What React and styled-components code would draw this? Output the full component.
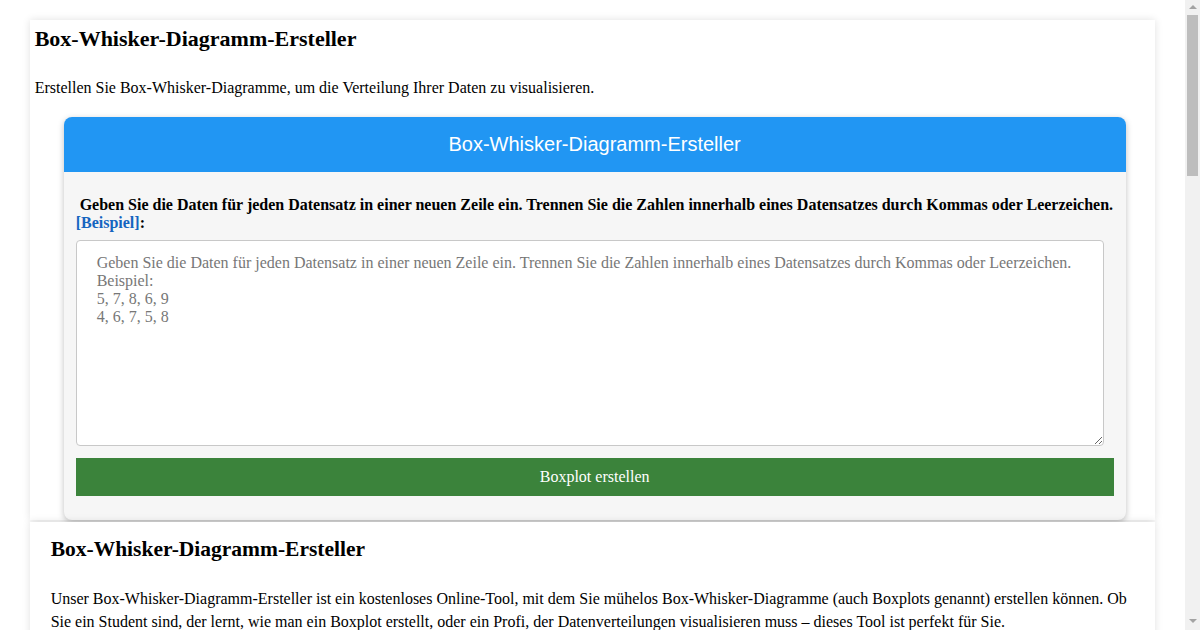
import React from 'react'
import styled, { createGlobalStyle } from 'styled-components'

const GlobalStyle = createGlobalStyle`
  html::-webkit-scrollbar {
    display: none;
  }
  body {
    margin: 0;
    background: #fff;
    font-family: "Liberation Serif", "Times New Roman", serif;
    font-size: 16px;
    color: #000;
  }
`

const Page = styled.div`
  margin-right: 15px;
  padding-bottom: 40px;
`

/* stand-in for the classic window scrollbar of the screenshot */
const ScrollTrack = styled.div`
  position: fixed;
  top: 0;
  right: 0;
  width: 15px;
  height: 100vh;
  background: #f1f1f1;
  display: flex;
  flex-direction: column;
  align-items: center;
  justify-content: space-between;
  padding: 5px 0 7px;
  box-sizing: border-box;
`

const Arrow = styled.div`
  width: 0;
  height: 0;
  border-left: 4px solid transparent;
  border-right: 4px solid transparent;
  ${({ down }) =>
    down ? 'border-top: 4px solid #a3a3a3;' : 'border-bottom: 4px solid #a3a3a3;'}
`

const Thumb = styled.div`
  position: absolute;
  top: 15px;
  left: 2px;
  width: 11px;
  height: 161px;
  background: #bdbdbd;
`

const Section = styled.div`
  width: 95%;
  margin: ${({ first }) => (first ? '20px auto 0' : '2px auto 0')};
  padding: ${({ first }) => (first ? '6px 5px 0' : '15px 20px 20px 21px')};
  box-sizing: border-box;
  background: #fff;
  box-shadow: 0 0 8px rgba(0, 0, 0, 0.12);
`

const Title = styled.h1`
  font-size: 22px;
  margin: 0 0 27px;
`

const SubTitle = styled.h2`
  font-size: 21.5px;
  margin: 0 0 25px;
`

const Lead = styled.p`
  margin: 0 0 20px;
`

const Text = styled.p`
  margin: 0 0 16px;
  line-height: 1.45;
`

const Card = styled.div`
  width: 1062px;
  margin: 0 0 0 29px;
  border-radius: 8px;
  overflow: hidden;
  background: #f6f6f6;
  box-shadow: 0 2px 6px rgba(0, 0, 0, 0.25);
`

const CardHead = styled.div`
  background: #2196f3;
  color: #fff;
  font-family: "Liberation Sans", Arial, sans-serif;
  font-size: 20px;
  text-align: center;
  padding: 16px 0;
`

const CardBody = styled.div`
  padding: 24px 12px 24px;
`

const Label = styled.label`
  display: block;
  font-weight: bold;
  margin-bottom: 8px;
`

const Example = styled.a`
  color: #1565c0;
  text-decoration: none;
`

const Input = styled.textarea`
  display: block;
  width: calc(100% - 10px);
  height: 206px;
  box-sizing: border-box;
  padding: 13px 20px 12px;
  border: 1px solid #c8c8c8;
  border-radius: 4px;
  font-family: "Liberation Serif", "Times New Roman", serif;
  font-size: 16px;
  line-height: 18px;
  background: #fff;
  &::placeholder {
    color: #777;
  }
`

const Submit = styled.button`
  display: block;
  width: 100%;
  height: 38px;
  margin-top: 12px;
  border: none;
  background: #3b833b;
  color: #fff;
  font-family: "Liberation Serif", "Times New Roman", serif;
  font-size: 16px;
  cursor: pointer;
`

const placeholder =
  'Geben Sie die Daten für jeden Datensatz in einer neuen Zeile ein. Trennen Sie die Zahlen innerhalb eines Datensatzes durch Kommas oder Leerzeichen.\nBeispiel:\n5, 7, 8, 6, 9\n4, 6, 7, 5, 8'

export default function App() {
  return (
    <Page>
      <GlobalStyle />
      <Section first>
        <Title>Box-Whisker-Diagramm-Ersteller</Title>
        <Lead>Erstellen Sie Box-Whisker-Diagramme, um die Verteilung Ihrer Daten zu visualisieren.</Lead>
        <Card>
          <CardHead>Box-Whisker-Diagramm-Ersteller</CardHead>
          <CardBody>
            <Label>
              &nbsp;Geben Sie die Daten für jeden Datensatz in einer neuen Zeile ein. Trennen Sie die Zahlen innerhalb eines Datensatzes durch Kommas oder Leerzeichen.{' '}
              <Example href="#">[Beispiel]</Example>:
            </Label>
            <Input placeholder={placeholder} />
            <Submit>Boxplot erstellen</Submit>
          </CardBody>
        </Card>
      </Section>
      <Section>
        <SubTitle>Box-Whisker-Diagramm-Ersteller</SubTitle>
        <Text>
          Unser Box-Whisker-Diagramm-Ersteller ist ein kostenloses Online-Tool, mit dem Sie mühelos Box-Whisker-Diagramme (auch Boxplots genannt) erstellen können. Ob Sie ein Student sind, der lernt, wie man ein Boxplot erstellt, oder ein Profi, der Datenverteilungen visualisieren muss – dieses Tool ist perfekt für Sie.
        </Text>
        <Text>
          Geben Sie einfach Ihre Datensätze ein, und das Tool berechnet automatisch Minimum, erstes Quartil, Median, drittes Quartil und Maximum für jeden Datensatz.
        </Text>
      </Section>
      <ScrollTrack>
        <Arrow />
        <Thumb />
        <Arrow down />
      </ScrollTrack>
    </Page>
  )
}
